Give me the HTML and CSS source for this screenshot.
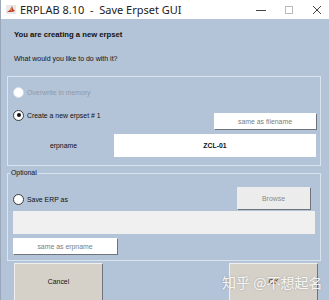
FILE: index.html
```html
<!DOCTYPE html>
<html lang="en">
<head>
    <meta charset="UTF-8">
    <meta name="viewport" content="width=device-width, initial-scale=1.0">
    <title>Save Erpset GUI</title>
    <link rel="stylesheet" href="styles.css">
</head>
<body>
    <div class="window">
        <div class="titlebar">
            <svg class="app-icon" width="10" height="9" viewBox="0 0 10 9">
                <rect x="0" y="0" width="10" height="9" fill="#e8e8e8"/>
                <path d="M1 7 L4 5 L6 1 L7 4 L9 6 L6 7 Z" fill="#c0392b"/>
                <path d="M4 5 L6 1 L6 7 Z" fill="#e67e22"/>
            </svg>
            <span class="title">ERPLAB 8.10 &nbsp;- &nbsp;Save Erpset GUI</span>
            <div class="controls">
                <svg width="12" height="12" viewBox="0 0 12 12"><path d="M1 6.5 H11" stroke="#444" stroke-width="1"/></svg>
                <svg width="12" height="12" viewBox="0 0 12 12"><rect x="2.5" y="2.5" width="7" height="7" fill="none" stroke="#bbb" stroke-width="1"/></svg>
                <svg width="12" height="12" viewBox="0 0 12 12"><path d="M2 2 L10 10 M10 2 L2 10" stroke="#444" stroke-width="1"/></svg>
            </div>
        </div>

        <div class="content">
            <p class="heading">You are creating a new erpset</p>
            <p class="question">What would you like to do with it?</p>

            <div class="panel">
                <label class="radio disabled"><span class="dot"></span>Overwrite in memory</label>
                <div class="create-row">
                    <label class="radio"><span class="dot checked"></span>Create a new erpset # 1</label>
                    <button class="btn btn-white btn-filename">same as filename</button>
                </div>
                <div class="name-row">
                    <span class="name-label">erpname</span>
                    <div class="field">ZCL-01</div>
                </div>
            </div>

            <fieldset class="optional">
                <legend>Optional</legend>
                <div class="save-row">
                    <label class="radio"><span class="dot"></span>Save ERP as</label>
                    <button class="btn btn-browse">Browse</button>
                </div>
                <div class="field field-grey"></div>
                <button class="btn btn-white btn-erpname">same as erpname</button>
            </fieldset>

            <div class="actions">
                <button class="btn btn-action">Cancel</button>
                <button class="btn btn-action">OK</button>
            </div>
        </div>

        <div class="watermark">知乎 @不想起名</div>
    </div>
</body>
</html>
```

FILE: styles.css
```css
/* Window frame */
body {
    margin: 0;
    font-family: "Liberation Sans", Arial, sans-serif;
    background: #b3c3d8;
    overflow: hidden;
}

.window {
    width: 329px;
    height: 300px;
    position: relative;
    background: #b3c3d8;
    box-sizing: border-box;
    border-left: 1px solid #9aa7b8;
}

/* Title bar */
.titlebar {
    height: 19px;
    background: #ffffff;
    display: flex;
    align-items: center;
    padding-left: 5px;
}

.app-icon {
    margin-right: 4px;
}

.title {
    font-family: "Noto Sans", "Open Sans", sans-serif;
    font-size: 11px;
    color: #222;
    white-space: nowrap;
}

.controls {
    margin-left: auto;
    display: flex;
    gap: 16px;
    padding-right: 6px;
}

/* Main area */
.content {
    padding: 11px 8px 0 6px;
}

p {
    margin: 0;
    color: #111;
}

.heading {
    font-size: 7.7px;
    font-weight: bold;
    line-height: 10px;
    padding-left: 7px;
}

.question {
    font-size: 7px;
    line-height: 10px;
    margin-top: 14px;
    padding-left: 7px;
}

/* Bordered panels */
.panel {
    margin-top: 12px;
    border: 1px solid #dbe3ee;
    padding: 9px 4px 8px 5px;
}

.radio {
    display: flex;
    align-items: center;
    height: 12px;
    font-size: 6.9px;
    color: #111;
}

.radio.disabled {
    color: #8e99a8;
}

.dot {
    width: 9px;
    height: 9px;
    border-radius: 50%;
    background: #fff;
    border: 1px solid #3a3a3a;
    margin-right: 3px;
    position: relative;
    flex-shrink: 0;
}

.disabled .dot {
    border-color: #d8dee6;
}

.dot.checked::after {
    content: "";
    position: absolute;
    left: 2.5px;
    top: 2.5px;
    width: 4px;
    height: 4px;
    border-radius: 50%;
    background: #111;
}

.create-row {
    display: flex;
    justify-content: space-between;
    align-items: flex-start;
    margin-top: 11px;
}

.btn {
    font-family: "Liberation Sans", Arial, sans-serif;
    font-size: 6.9px;
    border: none;
    padding: 0;
    cursor: pointer;
}

.btn-white {
    background: #ffffff;
    color: #7c7c7c;
    box-shadow: 1px 1px 0 #6f737a;
}

.btn-filename {
    width: 102px;
    height: 16px;
    margin-top: 4px;
}

.name-row {
    display: flex;
    align-items: center;
    margin-top: 5px;
}

.name-label {
    width: 101px;
    text-align: center;
    font-size: 6.9px;
    color: #111;
}

.field {
    flex: 1;
    height: 23px;
    background: #ffffff;
    display: flex;
    align-items: center;
    justify-content: center;
    font-size: 6.9px;
    font-weight: bold;
    color: #111;
}

/* Optional group */
.optional {
    margin: 2px 0 0 0;
    border: 1px solid #dbe3ee;
    padding: 9px 5px 6px 5px;
}

.optional legend {
    font-size: 6.9px;
    line-height: 10px;
    padding: 0 1px;
    margin-left: -3px;
    color: #111;
}

.save-row {
    display: flex;
    justify-content: space-between;
    align-items: center;
}

.save-row .radio {
    margin-top: 2px;
}

.btn-browse {
    width: 73px;
    height: 22px;
    margin-right: 5px;
    background: #ececec;
    color: #8a8a8a;
    box-shadow: 1px 1px 0 #6f737a;
}

.field-grey {
    flex: none;
    height: 23px;
    margin-top: 2px;
    background: #f0f0f0;
}

.btn-erpname {
    display: block;
    width: 104px;
    height: 16px;
    margin-top: 4px;
}

/* Bottom buttons */
.actions {
    display: flex;
    justify-content: space-between;
    margin-top: 2px;
    padding: 0 4px 0 7px;
}

.btn-action {
    width: 88px;
    height: 40px;
    background: #d5d1c9;
    color: #111;
    border-top: 1px solid #f2f0ec;
    border-left: 1px solid #f2f0ec;
    box-shadow: 1px 1px 0 #6f737a;
    padding-bottom: 5px;
}

/* Site watermark over the corner */
.watermark {
    position: absolute;
    left: 221px;
    top: 273px;
    font-family: "Noto Sans CJK SC", sans-serif;
    font-size: 14px;
    line-height: 18px;
    color: rgba(255, 255, 255, 0.9);
    text-shadow: 0 0 2px rgba(0, 0, 0, 0.25);
    white-space: nowrap;
}
```
